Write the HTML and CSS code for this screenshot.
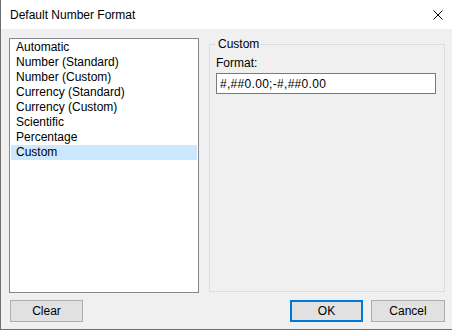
FILE: index.html
```html
<!DOCTYPE html>
<html lang="en">
  <head>
    <meta charset="UTF-8" />
    <title>Default Number Format</title>
    <link rel="stylesheet" href="styles.css">
  </head>
  <body>
    <div class="window">
      <div class="titlebar">
        <span class="title">Default Number Format</span>
        <svg class="close" width="10" height="10" viewBox="0 0 10 10">
          <path d="M0.5 0.5 L9.5 9.5 M9.5 0.5 L0.5 9.5" stroke="#000" stroke-width="1" fill="none" />
        </svg>
      </div>

      <div class="content">
        <div class="main">
          <ul class="listbox">
            <li>Automatic</li>
            <li>Number (Standard)</li>
            <li>Number (Custom)</li>
            <li>Currency (Standard)</li>
            <li>Currency (Custom)</li>
            <li>Scientific</li>
            <li>Percentage</li>
            <li class="selected">Custom</li>
          </ul>

          <fieldset class="group">
            <legend>Custom</legend>
            <label class="field-label" for="format">Format:</label>
            <input id="format" class="field" type="text" value="#,##0.00;-#,##0.00" />
          </fieldset>
        </div>

        <div class="buttons">
          <button class="btn">Clear</button>
          <span class="spacer"></span>
          <button class="btn default">OK</button>
          <button class="btn cancel">Cancel</button>
        </div>
      </div>
    </div>
  </body>
</html>
```

FILE: styles.css
```css
body {
  margin: 0;
  font-family: "Liberation Sans", Arial, sans-serif;
  font-size: 12px;
  color: #000;
  background: #f0f0f0;
}

.window {
  width: 452px;
  height: 330px;
  box-sizing: border-box;
  border-left: 1px solid #6f6f6f;
  border-bottom: 1px solid #6f6f6f;
  background: #f0f0f0;
  display: flex;
  flex-direction: column;
}

.titlebar {
  height: 29px;
  background: #fff;
  display: flex;
  align-items: center;
  padding-left: 9px;
  padding-right: 9px;
}

.title {
  flex: 1;
  line-height: 15px;
  margin-top: 1px;
}

.close {
  display: block;
  margin-top: 1px;
}

.content {
  padding: 8px 7px 0 8px;
}

.main {
  display: flex;
  gap: 10px;
}

.listbox {
  list-style: none;
  margin: 1px 0 0 0;
  padding: 1px 1px 0;
  width: 190px;
  height: 255px;
  box-sizing: border-box;
  border: 1px solid #828790;
  background: #fff;
}

.listbox li {
  height: 15px;
  line-height: 15px;
  padding-left: 5px;
  white-space: nowrap;
}

.listbox .selected {
  background: #cce8ff;
}

.group {
  margin: 0;
  width: 236px;
  height: 255px;
  box-sizing: border-box;
  border: 1px solid #dcdcdc;
  padding: 0 7px 0 6px;
  display: flex;
  flex-direction: column;
}

.group legend {
  padding: 0 2px;
  line-height: 15px;
}

.field-label {
  display: block;
  line-height: 15px;
  margin-top: 4px;
}

.field {
  display: block;
  margin-top: 2px;
  width: 220px;
  height: 21px;
  box-sizing: border-box;
  border: 1px solid #7a7a7a;
  padding: 0 3px;
  font-family: inherit;
  font-size: 12px;
  letter-spacing: 0.3px;
  color: #000;
  background: #fff;
  outline: none;
}

.buttons {
  display: flex;
  margin-top: 7px;
  gap: 8px;
}

.spacer {
  flex: 1;
}

.btn {
  width: 73px;
  height: 22px;
  box-sizing: border-box;
  border: 1px solid #adadad;
  background: #e1e1e1;
  font-family: inherit;
  font-size: 12px;
  color: #000;
  padding: 0;
  margin: 0;
}

.btn:first-child {
  margin-left: 1px;
}

.btn.default {
  border: 2px solid #0078d7;
}

.btn.cancel {
  width: 74px;
}
```
